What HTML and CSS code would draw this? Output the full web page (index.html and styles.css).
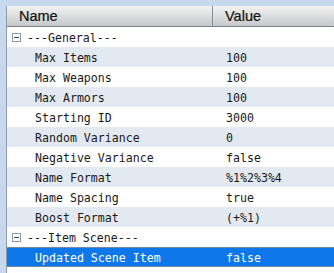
FILE: index.html
```html
<!DOCTYPE html>
<html>
<head>
<meta charset="utf-8">
<link rel="stylesheet" href="styles.css">
</head>
<body>
<div class="panel">
  <div class="header">
    <div class="hcell hname">Name</div>
    <div class="hcell hvalue">Value</div>
  </div>
  <div class="rows">
    <div class="row group"><span class="toggle"></span><span class="gname">---General---</span></div>
    <div class="row alt"><span class="name">Max Items</span><span class="value">100</span></div>
    <div class="row"><span class="name">Max Weapons</span><span class="value">100</span></div>
    <div class="row alt"><span class="name">Max Armors</span><span class="value">100</span></div>
    <div class="row"><span class="name">Starting ID</span><span class="value">3000</span></div>
    <div class="row alt"><span class="name">Random Variance</span><span class="value">0</span></div>
    <div class="row"><span class="name">Negative Variance</span><span class="value">false</span></div>
    <div class="row alt"><span class="name">Name Format</span><span class="value">%1%2%3%4</span></div>
    <div class="row"><span class="name">Name Spacing</span><span class="value">true</span></div>
    <div class="row alt"><span class="name">Boost Format</span><span class="value">(+%1)</span></div>
    <div class="row group"><span class="toggle"></span><span class="gname">---Item Scene---</span></div>
    <div class="row selected"><span class="name">Updated Scene Item</span><span class="value">false</span></div>
    <div class="row"><span class="name">List Equipped Items</span><span class="value">true</span></div>
  </div>
</div>
</body>
</html>
```
FILE: styles.css
```css
html, body {
  margin: 0;
  padding: 0;
  height: 100%;
  overflow: hidden;
}
body {
  background: #c6d9ee;
  padding: 6px 0 0 6px;
  box-sizing: border-box;
}
.panel {
  background: #ffffff;
  border-left: 1px solid #8e9cab;
  height: 100%;
  overflow: hidden;
}
.header {
  display: flex;
  height: 20px;
  background: linear-gradient(#f3f3f3, #c6c8ca);
  border-bottom: 1px solid #7c8188;
}
.hcell {
  font-family: "Liberation Sans", Arial, sans-serif;
  font-size: 14.5px;
  line-height: 21px;
  color: #111;
  -webkit-text-stroke: 0.2px #111;
}
.hname {
  width: 206px;
  padding-left: 12px;
  box-sizing: border-box;
  border-right: 1px solid #8a8d92;
}
.hvalue {
  padding-left: 12px;
}
.rows {
  display: flex;
  flex-direction: column;
}
.row {
  display: flex;
  align-items: center;
  height: 20px;
  padding-top: 2px;
  box-sizing: border-box;
  font-family: "DejaVu Sans Mono", monospace;
  font-size: 11.6px;
  color: #1a1a1a;
  background: #ffffff;
}
.row.alt {
  background: #e3e9f0;
}
.row.selected {
  background: #0e78ea;
  color: #ffffff;
  border-top: 1px solid #6d8cab;
  border-bottom: 1px solid #6d8cab;
  padding-top: 1px;
}
.name {
  width: 219px;
  padding-left: 28px;
  box-sizing: border-box;
  white-space: nowrap;
  overflow: hidden;
}
.toggle {
  width: 9px;
  height: 9px;
  box-sizing: border-box;
  border: 1px solid #8c97a6;
  margin-left: 5px;
  margin-top: -2px;
  position: relative;
  background: #fff;
}
.toggle::after {
  content: "";
  position: absolute;
  left: 1px;
  right: 1px;
  top: 3px;
  height: 1px;
  background: #2a4a8a;
}
.gname {
  margin-left: 6px;
}
```
